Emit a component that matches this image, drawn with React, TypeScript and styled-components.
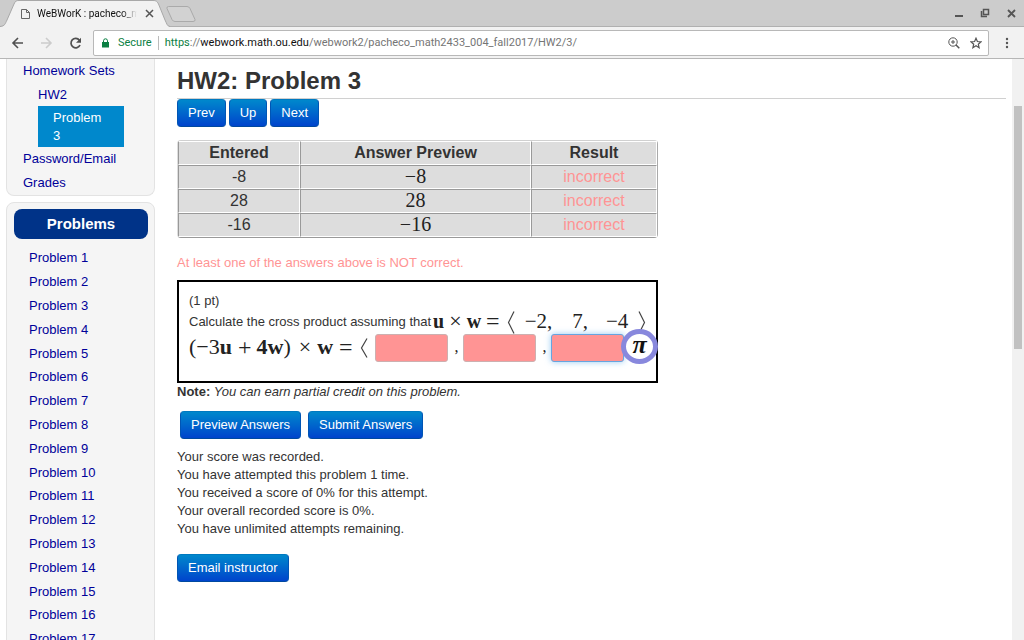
import React from 'react';
import styled, { createGlobalStyle, css } from 'styled-components';

const Global = createGlobalStyle`
  * { box-sizing: border-box; }
  body {
    margin: 0;
    background: #fff;
    color: #333;
    font: 13px/18px "Liberation Sans", Arial, sans-serif;
  }
  button, input { font: inherit; }
`;

const Window = styled.div`
  height: 100vh;
  display: flex;
  flex-direction: column;
  overflow: hidden;
`;

const TabStrip = styled.header`
  flex: none;
  height: 27px;
  display: flex;
  background: #ccc;
  border-bottom: 1px solid #b0b0b0;
`;

const Tab = styled.div`
  position: relative;
  width: 170px;
  height: 27px;
  padding: 0 14px 0 20px;
  display: flex;
  align-items: center;
  gap: 6px;
`;

const TabShape = styled.svg`
  position: absolute;
  inset: 0;
`;

const TabIcon = styled.svg`
  position: relative;
  flex: none;
`;

const TabTitle = styled.span`
  position: relative;
  flex: 1;
  overflow: hidden;
  white-space: nowrap;
  font: 10px/16px Roboto, sans-serif;
  color: #111;
  mask-image: linear-gradient(to right, #000 85%, transparent);
`;

const IconButton = styled.button<{ $w?: number }>`
  position: relative;
  flex: none;
  width: ${p => p.$w ?? 16}px;
  height: 16px;
  padding: 0;
  border: 0;
  background: none;
  display: flex;
  align-items: center;
  justify-content: center;
`;

const NewTab = styled.svg`
  flex: none;
  margin: 5px 0 0 -5px;
`;

const WindowControls = styled.div`
  margin-left: auto;
  padding-right: 5px;
  display: flex;
  align-items: center;
  gap: 10px;
`;

const Toolbar = styled.div`
  flex: none;
  height: 32px;
  padding: 3px 9px 2px;
  display: flex;
  align-items: center;
  gap: 13px;
  background: #f2f2f2;
  border-bottom: 1px solid #b6b6b6;
`;

const Omnibox = styled.div`
  flex: 1;
  height: 26px;
  margin: 0 -3px 0 -3px;
  padding: 0 4px 0 7px;
  display: flex;
  align-items: center;
  background: #fff;
  border: 1px solid #b8b8b8;
  border-radius: 2px;
  font: 11px/16px Roboto, sans-serif;
  color: #757575;
`;

const Secure = styled.span`
  margin-left: 8px;
  padding-right: 6px;
  border-right: 1px solid #bbb;
  line-height: 14px;
  color: #0b8043;
`;

const Address = styled.span`
  flex: 1;
  padding-left: 6px;
  white-space: nowrap;
  i { font-style: normal; color: #0b8043; }
  b { font-weight: 400; color: #111; }
`;

const Actions = styled.span`
  display: flex;
  gap: 6px;
`;

const Viewport = styled.div`
  flex: 1;
  min-height: 0;
  display: flex;
`;

const Page = styled.div`
  flex: 1;
  min-width: 0;
  display: flex;
  gap: 22px;
  padding: 0 6px;
  overflow: hidden;
`;

const Scrollbar = styled.div`
  flex: none;
  width: 12px;
  padding: 47px 2px 0;
  background: #f1f1f1;
`;

const Thumb = styled.div`
  height: 243px;
  background: #c1c1c1;
`;

const Sidebar = styled.aside`
  flex: none;
  width: 149px;
  display: flex;
  flex-direction: column;
  gap: 6px;
`;

const Card = styled.nav<{ $top?: boolean }>`
  flex: none;
  background: #f5f5f5;
  border: 1px solid #e3e3e3;
  border-radius: 8px;
  ${p => p.$top
    ? css`border-top: 0; border-radius: 0 0 8px 8px; padding: 0 30px 0 16px;`
    : css`padding: 6px 6px 6px 7px;`}
`;

const NavLink = styled.a<{ $indent?: boolean }>`
  display: block;
  margin-left: ${p => (p.$indent ? 15 : 0)}px;
  line-height: ${p => (p.$indent ? 23 : 24)}px;
  color: #009;
  text-decoration: none;
`;

const ActiveLink = styled.a`
  display: block;
  margin-left: 15px;
  padding: 3px 20px 2px 15px;
  background: #08c;
  color: #fff;
  text-decoration: none;
`;

const CardTitle = styled.h2`
  margin: 0 0 7px;
  border-radius: 8px;
  background: #038;
  color: #fff;
  font-size: 15px;
  line-height: 30px;
  text-align: center;
`;

const ProblemList = styled.ul`
  list-style: none;
  margin: 0;
  padding: 0 0 0 15px;
  li:nth-child(5n) { margin-bottom: -1px; }
`;

const Main = styled.main`
  flex: 1;
  min-width: 0;
`;

const Title = styled.h1`
  margin: 0;
  padding: 7px 0 2px;
  border-bottom: 1px solid #d0d0d0;
  font-size: 24px;
  line-height: 30px;
`;

const Row = styled.div<{ $gap: number; $inset?: number }>`
  display: flex;
  gap: ${p => p.$gap}px;
  padding-left: ${p => p.$inset ?? 0}px;
`;

const Button = styled.button`
  height: 28px;
  padding: 0 10px;
  border: 1px solid;
  border-color: #0079c0 #0055b4 #0049a0;
  border-radius: 4px;
  background: linear-gradient(#08c, #04c);
  color: #fff;
  line-height: 26px;
  white-space: nowrap;
`;

const Results = styled.table`
  width: 481px;
  margin: 13px 0 16px;
  border: 1px solid;
  border-color: #d0d0d0 #aaa #999 #ddd;
  border-radius: 4px;
  border-collapse: separate;
  border-spacing: 0;
  table-layout: fixed;
  text-align: center;
  font-size: 16px;
  th, td {
    height: 24px;
    padding: 0;
    background: #ddd;
    border: 1px solid;
    border-color: #999 #fff #fff #999;
    line-height: 20px;
  }
  th { border-top-color: #fff; }
`;

const EnteredColumn = styled.col`
  width: 122px;
`;

const PreviewColumn = styled.col`
  width: 231px;
`;

const Incorrect = styled.td`
  color: #ff9494;
`;

const MathText = styled.span`
  display: block;
  padding-bottom: 2px;
  font: 20px/18px "Liberation Serif", serif;
  color: #222;
  white-space: nowrap;
`;

const Warning = styled.p`
  margin: 0 0 8px;
  color: #ff9494;
`;

const Problem = styled.section`
  position: relative;
  width: 481px;
  height: 103px;
  padding: 10px;
  border: 2px solid #000;
`;

const MathLine = styled.div<{ $tall?: boolean }>`
  display: flex;
  align-items: center;
  height: ${p => (p.$tall ? 28 : 24)}px;
  white-space: nowrap;
`;

const Term = styled.span<{ $l?: number; $size?: number }>`
  margin-left: ${p => p.$l ?? 0}px;
  padding-bottom: 2px;
  font: ${p => p.$size ?? 20}px/22px "Liberation Serif", serif;
  color: #222;
`;

const Angle = styled.svg<{ $l: number }>`
  flex: none;
  margin-left: ${p => p.$l}px;
`;

const Answer = styled.input<{ $l: number }>`
  flex: none;
  width: 73px;
  height: 28px;
  margin-left: ${p => p.$l}px;
  padding: 2px 5px;
  background: #ff9494;
  border: 1px solid #ccb0b0;
  border-radius: 3px;
  outline: 0;
  &:last-of-type {
    border-color: #66a5e0;
    box-shadow: 0 0 6px rgba(82, 168, 236, 0.6);
  }
`;

const PiButton = styled.button`
  position: absolute;
  right: -2px;
  top: 47px;
  width: 37px;
  height: 35px;
  padding: 0 0 3px;
  border: 5px solid #8888dd;
  border-radius: 50%;
  background: #fff;
  color: #111;
  font: italic bold 26px/20px "Liberation Serif", serif;
`;

const Note = styled.p`
  margin: 0 0 10px;
`;

const Score = styled.p`
  margin: 9px 0 16px;
`;

const problems = Array.from({ length: 18 }, (_, i) => i + 1);
const answers = [['-8', '−8'], ['28', '28'], ['-16', '−16']];

const LeftAngle = ({ l, h }: { l: number; h: number }) => (
  <Angle $l={l} width="8" height={h} viewBox={`0 0 8 ${h}`} fill="none" stroke="#444" strokeWidth="1.200" aria-hidden="true">
    <path d={`M7 .5L1.500 ${h / 2}L7 ${h - 0.5}`} />
  </Angle>
);

export default function App() {
  return (
    <Window>
      <Global />
      <TabStrip>
        <Tab>
          <TabShape width="170" height="27" viewBox="0 0 170 27" aria-hidden="true">
            <path d="M0 27C5 26 5 24 7 20L14 4C15.500 1 16 .5 19 .5H153C156 .5 157 1 158.500 4L165 20C167 24 167 26 170 27Z" fill="#f2f2f2" />
            <path d="M0 26.500C5 26 5 24 7 20L14 4C15.500 1 16 .5 19 .5H153C156 .5 157 1 158.500 4L165 20C167 24 167 26 170 26.500" fill="none" stroke="#a8a8a8" />
          </TabShape>
          <TabIcon width="11" height="12" viewBox="0 0 11 12" fill="none" stroke="#666" aria-hidden="true">
            <path d="M1.500 1.500H6.500L9.500 4.500V10.500H1.500ZM6.500 1.500V4.500H9.500" />
          </TabIcon>
          <TabTitle>WeBWorK : pacheco_math2433</TabTitle>
          <IconButton $w={13} aria-label="Close tab">
            <svg width="9" height="9" viewBox="0 0 9 9" stroke="#555" strokeWidth="1.500"><path d="M1 1L8 8M8 1L1 8" /></svg>
          </IconButton>
        </Tab>
        <NewTab width="32" height="18" viewBox="0 0 32 18" aria-hidden="true">
          <path d="M3.500 1.500H22Q24 1.500 25 3.500L30 14.500Q30.500 16.500 28 16.500H10Q8 16.500 7 14.500L2 3.500Q1.500 1.500 3.500 1.500Z" fill="#d2d2d2" stroke="#aaa" />
        </NewTab>
        <WindowControls>
          <IconButton aria-label="Minimize">
            <svg width="10" height="10" viewBox="0 0 10 10"><path d="M1 7H9V9H1Z" fill="#555" /></svg>
          </IconButton>
          <IconButton aria-label="Restore">
            <svg width="10" height="10" viewBox="0 0 10 10" fill="none" stroke="#555" strokeWidth="1.500"><path d="M3.500 1.500H8.500V6.500H3.500ZM1.500 3V8.500H7" /></svg>
          </IconButton>
          <IconButton aria-label="Close window">
            <svg width="9" height="9" viewBox="0 0 9 9" stroke="#555" strokeWidth="1.800"><path d="M1 1L8 8M8 1L1 8" /></svg>
          </IconButton>
        </WindowControls>
      </TabStrip>

      <Toolbar>
        <IconButton aria-label="Back">
          <svg width="13" height="12" viewBox="0 0 13 12" fill="none" stroke="#505050" strokeWidth="1.600"><path d="M12 6H2M7 1L2 6L7 11" /></svg>
        </IconButton>
        <IconButton aria-label="Forward">
          <svg width="13" height="12" viewBox="0 0 13 12" fill="none" stroke="#ccc" strokeWidth="1.600"><path d="M1 6H11M6 1L11 6L6 11" /></svg>
        </IconButton>
        <IconButton aria-label="Reload">
          <svg width="13" height="13" viewBox="0 0 13 13"><path d="M10.400 3.200A4.700 4.700 0 1 0 11 8" fill="none" stroke="#505050" strokeWidth="1.700" /><path d="M12 .8V5.800H7Z" fill="#505050" /></svg>
        </IconButton>
        <Omnibox>
          <svg width="9" height="10" viewBox="0 0 9 10" aria-hidden="true"><path d="M1 4H8V9.500H1Z" fill="#0b8043" /><path d="M2.500 4V2.800A2 2 0 0 1 6.500 2.800V4" fill="none" stroke="#0b8043" /></svg>
          <Secure>Secure</Secure>
          <Address><i>https</i>://<b>webwork.math.ou.edu</b>/webwork2/pacheco_math2433_004_fall2017/HW2/3/</Address>
          <Actions>
            <IconButton aria-label="Zoom">
              <svg width="12" height="12" viewBox="0 0 12 12" fill="none" stroke="#555"><circle cx="5" cy="5" r="4.200" /><path d="M3 5H7M5 3V7" /><path d="M8 8L11.300 11.300" strokeWidth="1.500" /></svg>
            </IconButton>
            <IconButton aria-label="Bookmark">
              <svg width="12" height="12" viewBox="0 0 12 12" fill="none" stroke="#555" strokeWidth="1.200"><path d="M6 1.200L7.400 4.500L11 4.800L8.300 7.200L9.100 10.700L6 8.800L2.900 10.700L3.700 7.200L1 4.800L4.600 4.500Z" /></svg>
            </IconButton>
          </Actions>
        </Omnibox>
        <IconButton aria-label="Menu">
          <svg width="4" height="12" viewBox="0 0 4 12" fill="#555"><circle cx="2" cy="2" r="1.200" /><circle cx="2" cy="6" r="1.200" /><circle cx="2" cy="10" r="1.200" /></svg>
        </IconButton>
      </Toolbar>

      <Viewport>
        <Page>
          <Sidebar>
            <Card $top aria-label="Main menu">
              <NavLink href="#sets">Homework Sets</NavLink>
              <NavLink href="#hw2" $indent>HW2</NavLink>
              <ActiveLink href="#hw2-3">Problem 3</ActiveLink>
              <NavLink href="#password">Password/Email</NavLink>
              <NavLink href="#grades">Grades</NavLink>
            </Card>
            <Card aria-label="Problems">
              <CardTitle>Problems</CardTitle>
              <ProblemList>
                {problems.map(n => (
                  <li key={n}><NavLink href={`#problem-${n}`}>Problem {n}</NavLink></li>
                ))}
              </ProblemList>
            </Card>
          </Sidebar>

          <Main>
            <Title>HW2: Problem 3</Title>
            <Row $gap={3}>
              <Button>Prev</Button>
              <Button>Up</Button>
              <Button>Next</Button>
            </Row>

            <Results>
              <colgroup>
                <EnteredColumn />
                <PreviewColumn />
                <col />
              </colgroup>
              <thead>
                <tr><th>Entered</th><th>Answer Preview</th><th>Result</th></tr>
              </thead>
              <tbody>
                {answers.map(([entered, preview]) => (
                  <tr key={entered}>
                    <td>{entered}</td>
                    <td><MathText>{preview}</MathText></td>
                    <Incorrect>incorrect</Incorrect>
                  </tr>
                ))}
              </tbody>
            </Results>

            <Warning>At least one of the answers above is NOT correct.</Warning>

            <Problem>
              <div>(1 pt)</div>
              <MathLine>
                Calculate the cross product assuming that
                <Term $l={2}><b>u</b></Term>
                <Term $l={5} $size={22}>×</Term>
                <Term $l={5}><b>w</b></Term>
                <Term $l={5} $size={24}>=</Term>
                <LeftAngle l={7} h={23} />
                <Term $l={10} $size={21}>−2,</Term>
                <Term $l={20} $size={21}>7,</Term>
                <Term $l={18} $size={21}>−4</Term>
                <Angle $l={10} width="8" height="23" viewBox="0 0 8 23" fill="none" stroke="#444" strokeWidth="1.200" aria-hidden="true">
                  <path d="M1 .5L6.500 11.500L1 22.500" />
                </Angle>
              </MathLine>
              <MathLine $tall>
                <Term $size={22}>(−3<b>u</b></Term>
                <Term $l={6} $size={24}>+</Term>
                <Term $l={5} $size={22}><b>4w</b>)</Term>
                <Term $l={8} $size={22}>×</Term>
                <Term $l={6} $size={22}><b>w</b></Term>
                <Term $l={6} $size={24}>=</Term>
                <LeftAngle l={7} h={20} />
                <Answer $l={7} aria-label="Answer 1" />
                <Term $l={7} $size={16}>,</Term>
                <Answer $l={4} aria-label="Answer 2" />
                <Term $l={7} $size={16}>,</Term>
                <Answer $l={4} aria-label="Answer 3" />
              </MathLine>
              <PiButton aria-label="Equation editor">π</PiButton>
            </Problem>
            <Note><b>Note:</b> <em>You can earn partial credit on this problem.</em></Note>

            <Row $gap={7} $inset={3}>
              <Button>Preview Answers</Button>
              <Button>Submit Answers</Button>
            </Row>

            <Score>
              Your score was recorded.<br />
              You have attempted this problem 1 time.<br />
              You received a score of 0% for this attempt.<br />
              Your overall recorded score is 0%.<br />
              You have unlimited attempts remaining.
            </Score>
            <Button>Email instructor</Button>
          </Main>
        </Page>
        <Scrollbar><Thumb /></Scrollbar>
      </Viewport>
    </Window>
  );
}
